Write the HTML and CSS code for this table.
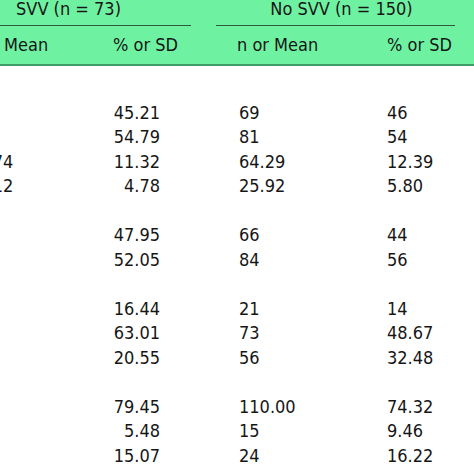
FILE: index.html
```html
<!DOCTYPE html>
<html>
<head>
<meta charset="utf-8">
<link rel="stylesheet" href="styles.css">
</head>
<body>
<div class="sheet">
  <div class="head">
    <div class="group group-a"><span class="group-label">SVV (n = 73)</span></div>
    <div class="group group-b"><span class="group-label">No SVV (n = 150)</span></div>
    <div class="hcell">n or Mean</div>
    <div class="hcell">% or SD</div>
    <div class="hcell"></div>
    <div class="hcell">n or Mean</div>
    <div class="hcell">% or SD</div>
  </div>
  <div class="body">
    <div class="row"><span></span><span class="num"></span><span></span><span></span><span></span></div>
    <div class="row"><span>33</span><span class="num">45.21</span><span></span><span>69</span><span>46</span></div>
    <div class="row"><span>40</span><span class="num">54.79</span><span></span><span>81</span><span>54</span></div>
    <div class="row"><span>64.74</span><span class="num">11.32</span><span></span><span>64.29</span><span>12.39</span></div>
    <div class="row"><span>25.12</span><span class="num">4.78</span><span></span><span>25.92</span><span>5.80</span></div>
    <div class="row"><span></span><span class="num"></span><span></span><span></span><span></span></div>
    <div class="row"><span>35</span><span class="num">47.95</span><span></span><span>66</span><span>44</span></div>
    <div class="row"><span>38</span><span class="num">52.05</span><span></span><span>84</span><span>56</span></div>
    <div class="row"><span></span><span class="num"></span><span></span><span></span><span></span></div>
    <div class="row"><span>12</span><span class="num">16.44</span><span></span><span>21</span><span>14</span></div>
    <div class="row"><span>46</span><span class="num">63.01</span><span></span><span>73</span><span>48.67</span></div>
    <div class="row"><span>15</span><span class="num">20.55</span><span></span><span>56</span><span>32.48</span></div>
    <div class="row"><span></span><span class="num"></span><span></span><span></span><span></span></div>
    <div class="row"><span>58</span><span class="num">79.45</span><span></span><span>110.00</span><span>74.32</span></div>
    <div class="row"><span>4</span><span class="num">5.48</span><span></span><span>15</span><span>9.46</span></div>
    <div class="row"><span>11</span><span class="num">15.07</span><span></span><span>24</span><span>16.22</span></div>
  </div>
</div>
</body>
</html>
```
FILE: styles.css
```css
html, body {
  margin: 0;
  padding: 0;
  background: #ffffff;
  overflow: hidden;
}
body {
  width: 474px;
  height: 474px;
  font-family: "DejaVu Sans Condensed", "DejaVu Sans", sans-serif;
  font-size: 18px;
  color: #161616;
}
.sheet {
  margin-left: -33px;
  width: 540px;
}
.head {
  display: grid;
  grid-template-columns: 146px 62px 62px 150px 120px;
  background: #6ef2a2;
  border-bottom: 2px solid #3f9c66;
}
.group {
  height: 26px;
  border-bottom: 1.5px solid #2f5a40;
  display: flex;
  align-items: flex-end;
  justify-content: center;
  line-height: 18px;
  padding-bottom: 7px;
  box-sizing: border-box;
}
.group-a {
  grid-column: 1 / 4;
  margin-left: -21px;
  margin-right: 46px;
}
.group-b {
  grid-column: 4 / 6;
  margin-left: -21px;
  margin-right: 52px;
}
.group-b .group-label {
  padding-left: 12px;
}
.hcell {
  height: 38px;
  line-height: 38px;
  white-space: nowrap;
}
.hcell:nth-of-type(5) {
  margin-left: -2px;
}
.body {
  padding-top: 10px;
}
.row {
  display: grid;
  grid-template-columns: 146px 62px 62px 150px 120px;
  height: 24.5px;
  line-height: 24.5px;
  white-space: nowrap;
}
.row span:nth-child(4) {
  padding-left: 2px;
}
.num {
  text-align: right;
  padding-right: 15px;
}
```
